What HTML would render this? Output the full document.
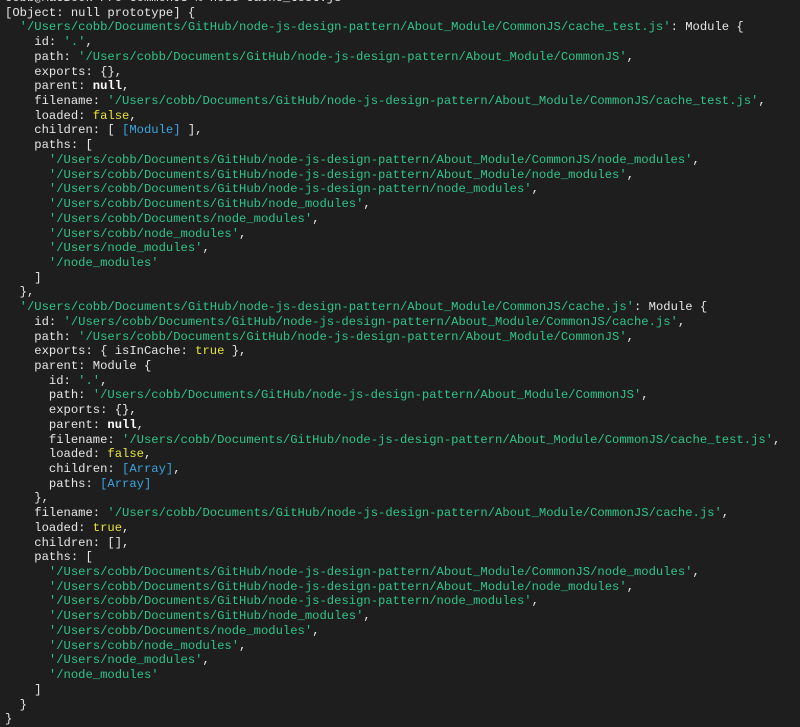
<!DOCTYPE html>
<html><head><meta charset="utf-8"><style>
html,body{margin:0;padding:0;background:#1e1e1e;width:800px;height:727px;overflow:hidden}
pre{margin:0;position:absolute;left:5px;top:-9px;font-family:"Liberation Mono",monospace;font-size:12.2px;line-height:14.72px;color:#e6e6e6;white-space:pre}
.g{color:#2fc48a}.y{color:#e8e33a}.b{color:#3aa5e0}.n{font-weight:bold;color:#fff}
</style></head><body><pre>cobb@MacBook-Pro CommonJS % node cache_test.js
[Object: null prototype] {
  <span class="g">'/Users/cobb/Documents/GitHub/node-js-design-pattern/About_Module/CommonJS/cache_test.js'</span>: Module {
    id: <span class="g">'.'</span>,
    path: <span class="g">'/Users/cobb/Documents/GitHub/node-js-design-pattern/About_Module/CommonJS'</span>,
    exports: {},
    parent: <span class="n">null</span>,
    filename: <span class="g">'/Users/cobb/Documents/GitHub/node-js-design-pattern/About_Module/CommonJS/cache_test.js'</span>,
    loaded: <span class="y">false</span>,
    children: [ <span class="b">[Module]</span> ],
    paths: [
      <span class="g">'/Users/cobb/Documents/GitHub/node-js-design-pattern/About_Module/CommonJS/node_modules'</span>,
      <span class="g">'/Users/cobb/Documents/GitHub/node-js-design-pattern/About_Module/node_modules'</span>,
      <span class="g">'/Users/cobb/Documents/GitHub/node-js-design-pattern/node_modules'</span>,
      <span class="g">'/Users/cobb/Documents/GitHub/node_modules'</span>,
      <span class="g">'/Users/cobb/Documents/node_modules'</span>,
      <span class="g">'/Users/cobb/node_modules'</span>,
      <span class="g">'/Users/node_modules'</span>,
      <span class="g">'/node_modules'</span>
    ]
  },
  <span class="g">'/Users/cobb/Documents/GitHub/node-js-design-pattern/About_Module/CommonJS/cache.js'</span>: Module {
    id: <span class="g">'/Users/cobb/Documents/GitHub/node-js-design-pattern/About_Module/CommonJS/cache.js'</span>,
    path: <span class="g">'/Users/cobb/Documents/GitHub/node-js-design-pattern/About_Module/CommonJS'</span>,
    exports: { isInCache: <span class="y">true</span> },
    parent: Module {
      id: <span class="g">'.'</span>,
      path: <span class="g">'/Users/cobb/Documents/GitHub/node-js-design-pattern/About_Module/CommonJS'</span>,
      exports: {},
      parent: <span class="n">null</span>,
      filename: <span class="g">'/Users/cobb/Documents/GitHub/node-js-design-pattern/About_Module/CommonJS/cache_test.js'</span>,
      loaded: <span class="y">false</span>,
      children: <span class="b">[Array]</span>,
      paths: <span class="b">[Array]</span>
    },
    filename: <span class="g">'/Users/cobb/Documents/GitHub/node-js-design-pattern/About_Module/CommonJS/cache.js'</span>,
    loaded: <span class="y">true</span>,
    children: [],
    paths: [
      <span class="g">'/Users/cobb/Documents/GitHub/node-js-design-pattern/About_Module/CommonJS/node_modules'</span>,
      <span class="g">'/Users/cobb/Documents/GitHub/node-js-design-pattern/About_Module/node_modules'</span>,
      <span class="g">'/Users/cobb/Documents/GitHub/node-js-design-pattern/node_modules'</span>,
      <span class="g">'/Users/cobb/Documents/GitHub/node_modules'</span>,
      <span class="g">'/Users/cobb/Documents/node_modules'</span>,
      <span class="g">'/Users/cobb/node_modules'</span>,
      <span class="g">'/Users/node_modules'</span>,
      <span class="g">'/node_modules'</span>
    ]
  }
}</pre></body></html>
